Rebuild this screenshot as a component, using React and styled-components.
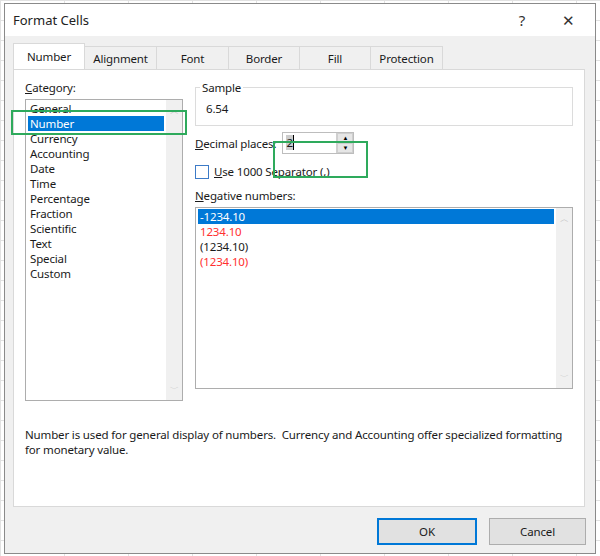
import React from "react";
import styled, { createGlobalStyle } from "styled-components";

const Global = createGlobalStyle`
  html,body{margin:0;padding:0;background:#fff;}
  body{font-family:"Noto Sans","Open Sans",sans-serif;font-size:11px;color:#1a1a1a;letter-spacing:-0.15px;}
`;

const Stage = styled.div`
  position:relative;width:600px;height:556px;overflow:hidden;
  background-color:#fff;
  background-image:linear-gradient(#e2e2e2 1px,transparent 1px),linear-gradient(90deg,#e2e2e2 1px,transparent 1px);
  background-size:64px 20px;padding:3px 4px 2px 4px;box-sizing:border-box;
`;
const Dialog = styled.div`
  height:100%;display:flex;flex-direction:column;background:#f0f0f0;border:1px solid #8a8a8a;box-sizing:border-box;
`;
const TitleBar = styled.div`
  height:33px;background:#fff;display:flex;align-items:center;padding-left:8px;font-size:13px;color:#222;letter-spacing:0;
`;
const Title = styled.div`flex:1;`;
const TitleBtn = styled.div`width:46px;text-align:center;font-size:15px;color:#333;`;
const Body = styled.div`flex:1;display:flex;flex-direction:column;padding:7px 8px 8px 8px;`;
const Tabs = styled.div`display:flex;height:26px;align-items:flex-end;`;
const Tab = styled.div`
  width:${p=>p.w}px;height:${p=>p.active?26:23}px;box-sizing:border-box;
  display:flex;align-items:center;justify-content:center;
  background:${p=>p.active?"#fff":"#f0f0f0"};
  border:1px solid #d9d9d9;border-bottom:none;margin-right:-1px;font-size:11.5px;
  position:relative;z-index:${p=>p.active?2:1};
`;
const Panel = styled.div`
  background:#fff;border:1px solid #d9d9d9;height:438px;box-sizing:border-box;
  display:flex;flex-direction:column;padding:10px 11px 0 11px;margin-right:2px;
`;
const Top = styled.div`display:flex;gap:12px;`;
const Left = styled.div`width:158px;display:flex;flex-direction:column;`;
const Label = styled.div`font-size:11.5px;height:17px;margin-top:${p=>p.mt||0}px;margin-bottom:${p=>p.mb||0}px;`;
const U = styled.span`text-decoration:underline;`;
const ListBox = styled.div`
  border:1px solid #adadad;height:${p=>p.h}px;box-sizing:border-box;display:flex;background:#fff;
`;
const Items = styled.div`flex:1;padding:1px 2px;`;
const Item = styled.div`
  height:15px;line-height:15px;padding-left:2px;font-size:11.5px;
  background:${p=>p.sel?"#0078d7":"transparent"};
  color:${p=>p.sel?"#fff":p.red?"#ff3030":"#1a1a1a"};
`;
const Scroll = styled.div`
  width:16px;background:#f0f0f0;display:flex;flex-direction:column;justify-content:space-between;align-items:center;
  color:#c2c2c2;font-size:9px;padding:4px 0;
`;
const Right = styled.div`flex:1;display:flex;flex-direction:column;`;
const Fieldset = styled.fieldset`
  margin:0;border:1px solid #dcdcdc;padding:6px 0 8px 10px;height:46px;box-sizing:border-box;
  legend{padding:0 2px;margin-left:-6px;font-size:11.5px;}
  font-size:11.5px;
`;
const Row = styled.div`display:flex;align-items:center;margin-top:${p=>p.mt||0}px;font-size:11.5px;`;
const Spin = styled.div`
  margin-left:6px;width:72px;height:22px;border:1px solid #bdbdbd;background:#fff;display:flex;box-sizing:border-box;
`;
const SpinVal = styled.div`flex:1;padding-left:3px;line-height:20px;font-size:11.5px;span{background:#ccc;border-right:1px solid #000;}`;
const SpinBtns = styled.div`width:16px;display:flex;flex-direction:column;border-left:1px solid #d0d0d0;`;
const SpinBtn = styled.div`flex:1;background:#e6e6e6;border:1px solid #cfcfcf;font-size:6px;display:flex;align-items:center;justify-content:center;color:#000;`;
const Check = styled.div`width:12px;height:12px;border:1px solid #3d7bc7;background:#fff;margin-right:5px;`;
const Desc = styled.div`margin-top:26px;font-size:11.5px;line-height:15px;`;
const Footer = styled.div`display:flex;justify-content:flex-end;gap:12px;padding-top:11px;padding-right:1px;`;
const Button = styled.div`
  width:${p=>p.def?100:97}px;height:27px;box-sizing:border-box;background:#e1e1e1;
  border:${p=>p.def?"2px solid #0078d7":"1px solid #adadad"};display:flex;align-items:center;justify-content:center;font-size:11.5px;
`;
const Highlight = styled.div`
  position:absolute;left:${p=>p.x}px;top:${p=>p.y}px;width:${p=>p.w}px;height:${p=>p.h}px;
  border:2px solid #2eaa5c;box-sizing:border-box;pointer-events:none;
`;

const cats=["General","Number","Currency","Accounting","Date","Time","Percentage","Fraction","Scientific","Text","Special","Custom"];
const tabs=[["Number",72],["Alignment",73],["Font",73],["Border",72],["Fill",72],["Protection",73]];

export default function App(){
  return (<>
    <Global/>
    <Stage>
      <Dialog>
        <TitleBar><Title>Format Cells</Title><TitleBtn>?</TitleBtn><TitleBtn style={{marginRight:4}}>✕</TitleBtn></TitleBar>
        <Body>
          <Tabs>{tabs.map(([t,w],i)=><Tab key={t} w={w} active={i===0}>{t}</Tab>)}</Tabs>
          <Panel>
            <Top>
              <Left>
                <Label mb={2}><U>C</U>ategory:</Label>
                <ListBox h={302}>
                  <Items>{cats.map((c,i)=><Item key={c} sel={i===1}>{c}</Item>)}</Items>
                  <Scroll><span>︿</span><span>﹀</span></Scroll>
                </ListBox>
              </Left>
              <Right>
                <Fieldset><legend>Sample</legend>6.54</Fieldset>
                <Row mt={6}><U>D</U>ecimal places:
                  <Spin><SpinVal><span>2</span></SpinVal><SpinBtns><SpinBtn>▲</SpinBtn><SpinBtn>▼</SpinBtn></SpinBtns></Spin>
                </Row>
                <Row mt={10}><Check/><U>U</U>se 1000 Separator (,)</Row>
                <Label mt={9} mb={2}><U>N</U>egative numbers:</Label>
                <ListBox h={182}>
                  <Items>
                    <Item sel>-1234.10</Item>
                    <Item red>1234.10</Item>
                    <Item>(1234.10)</Item>
                    <Item red>(1234.10)</Item>
                  </Items>
                  <Scroll><span>︿</span><span>﹀</span></Scroll>
                </ListBox>
              </Right>
            </Top>
            <Desc>Number is used for general display of numbers.&nbsp; Currency and Accounting offer specialized formatting for monetary value.</Desc>
          </Panel>
          <Footer><Button def>OK</Button><Button>Cancel</Button></Footer>
        </Body>
      </Dialog>
      <Highlight x={11} y={110} w={176} h={25}/>
      <Highlight x={273} y={141} w={95} h={37}/>
    </Stage>
  </>);
}
